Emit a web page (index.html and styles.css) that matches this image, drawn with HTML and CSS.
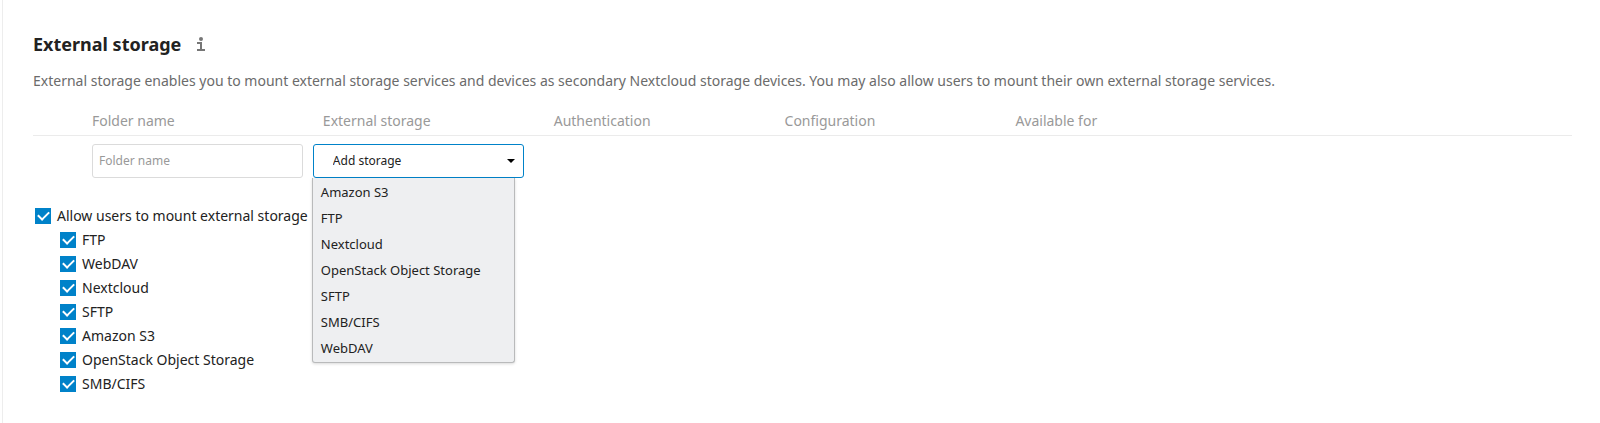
FILE: index.html
```html
<!DOCTYPE html>
<html lang="en">
<head>
    <meta charset="UTF-8">
    <title>External storage</title>
    <link rel="stylesheet" href="styles.css">
</head>
<body>
    <main class="section">
        <div class="section-header">
            <h2>External storage</h2>
            <a href="#" class="icon-info" aria-label="Open documentation">
                <svg width="10" height="14" viewBox="0 0 10 14">
                    <circle cx="5" cy="2" r="2"/>
                    <path d="M1 5h5v7h3v2H1v-2h3V7H1z"/>
                </svg>
            </a>
        </div>
        <p class="settings-hint">External storage enables you to mount external storage services and devices as secondary Nextcloud storage devices. You may also allow users to mount their own external storage services.</p>

        <table class="grid">
            <thead>
                <tr>
                    <th class="status"></th>
                    <th>Folder name</th>
                    <th>External storage</th>
                    <th>Authentication</th>
                    <th>Configuration</th>
                    <th>Available for</th>
                    <th class="actions"></th>
                </tr>
            </thead>
            <tbody>
                <tr>
                    <td></td>
                    <td class="mount-point">
                        <input type="text" id="folder-name" placeholder="Folder name" aria-label="Folder name">
                    </td>
                    <td class="backend">
                        <div class="select-wrap">
                            <select id="select-backend" aria-label="Add storage">
                                <option>Add storage</option>
                            </select>
                            <svg class="caret" width="8" height="4" viewBox="0 0 8 4"><path d="M0 0h8L4 4z"/></svg>
                            <ul class="menu">
                                <li>Amazon S3</li>
                                <li>FTP</li>
                                <li>Nextcloud</li>
                                <li>OpenStack Object Storage</li>
                                <li>SFTP</li>
                                <li>SMB/CIFS</li>
                                <li>WebDAV</li>
                            </ul>
                        </div>
                    </td>
                    <td></td>
                    <td></td>
                    <td></td>
                    <td></td>
                </tr>
            </tbody>
        </table>

        <div class="user-mounting">
            <div class="check"><input type="checkbox" id="allow" checked><label for="allow">Allow users to mount external storage</label></div>
            <div class="backends">
                <div class="check"><input type="checkbox" id="ftp" checked><label for="ftp">FTP</label></div>
                <div class="check"><input type="checkbox" id="webdav" checked><label for="webdav">WebDAV</label></div>
                <div class="check"><input type="checkbox" id="nextcloud" checked><label for="nextcloud">Nextcloud</label></div>
                <div class="check"><input type="checkbox" id="sftp" checked><label for="sftp">SFTP</label></div>
                <div class="check"><input type="checkbox" id="amazons3" checked><label for="amazons3">Amazon S3</label></div>
                <div class="check"><input type="checkbox" id="openstack" checked><label for="openstack">OpenStack Object Storage</label></div>
                <div class="check"><input type="checkbox" id="smb" checked><label for="smb">SMB/CIFS</label></div>
            </div>
        </div>
    </main>
</body>
</html>
```
FILE: styles.css
```css
* {
    box-sizing: border-box;
}
body {
    margin: 0;
    padding-left: 2px;
    background: #fff;
    color: #222;
    font-family: "Noto Sans", sans-serif;
    font-size: 14px;
}
.section {
    min-height: 100vh;
    padding: 29px 28px 20px 30px;
    border-left: 1px solid #ededed;
}
.section-header {
    display: flex;
    align-items: center;
    gap: 15px;
}
h2 {
    margin: 0;
    font-size: 18px;
    font-weight: 700;
    line-height: 30px;
}
.icon-info {
    display: flex;
}
.icon-info svg {
    fill: #767676;
}
.settings-hint {
    margin: 11px 0 13px;
    color: #6b6b6b;
    line-height: 22px;
}

/* mounts table */
.grid {
    width: 100%;
    table-layout: fixed;
    border-collapse: collapse;
}
.grid th {
    width: 15%;
    height: 30px;
    padding: 2px 10px 0;
    border-bottom: 1px solid #ebebeb;
    color: #999;
    font-weight: normal;
    text-align: left;
}
.grid th.status {
    width: 49px;
    padding: 0;
}
.grid th.actions {
    width: auto;
}
.grid td {
    padding: 8px 10px;
}
.grid td.backend {
    padding: 8px 20px 8px 0;
}
.grid input,
.grid select {
    display: block;
    width: 100%;
    height: 34px;
    margin: 0;
    padding: 0 6px;
    border: 1px solid #dbdbdb;
    border-radius: 3px;
    outline: none;
    background: #fff;
    color: #222;
    font-family: inherit;
    font-size: 12px;
}
.grid input::placeholder {
    color: #999;
}
.grid select {
    appearance: none;
    padding: 0 19px;
    border-color: #0082c9;
}
.select-wrap {
    position: relative;
}
.caret {
    position: absolute;
    top: 15px;
    right: 9px;
}
.menu {
    position: absolute;
    top: 100%;
    left: -1px;
    right: 9px;
    margin: 0;
    padding: 1px 0;
    border: 1px solid #b9babb;
    border-top-width: 0;
    border-radius: 0 0 3px 3px;
    background: #eeeff1;
    box-shadow: 0 1px 3px rgba(0, 0, 0, 0.15);
    font-size: 13px;
    line-height: 26px;
    list-style: none;
}
.menu li {
    padding: 0 8px;
}

/* user mounting */
.user-mounting {
    margin-top: 18px;
}
.backends {
    padding-left: 25px;
}
.check {
    display: flex;
    align-items: center;
    gap: 6px;
    padding-left: 2px;
    line-height: 24px;
}
.check input {
    appearance: none;
    display: grid;
    place-items: center;
    width: 16px;
    height: 16px;
    margin: 0;
    background: #0082c9;
}
.check input:checked::before {
    content: "";
    width: 9px;
    height: 5px;
    margin-bottom: 3px;
    border: solid #fff;
    border-width: 0 0 2px 2px;
    transform: rotate(-45deg);
}
```
